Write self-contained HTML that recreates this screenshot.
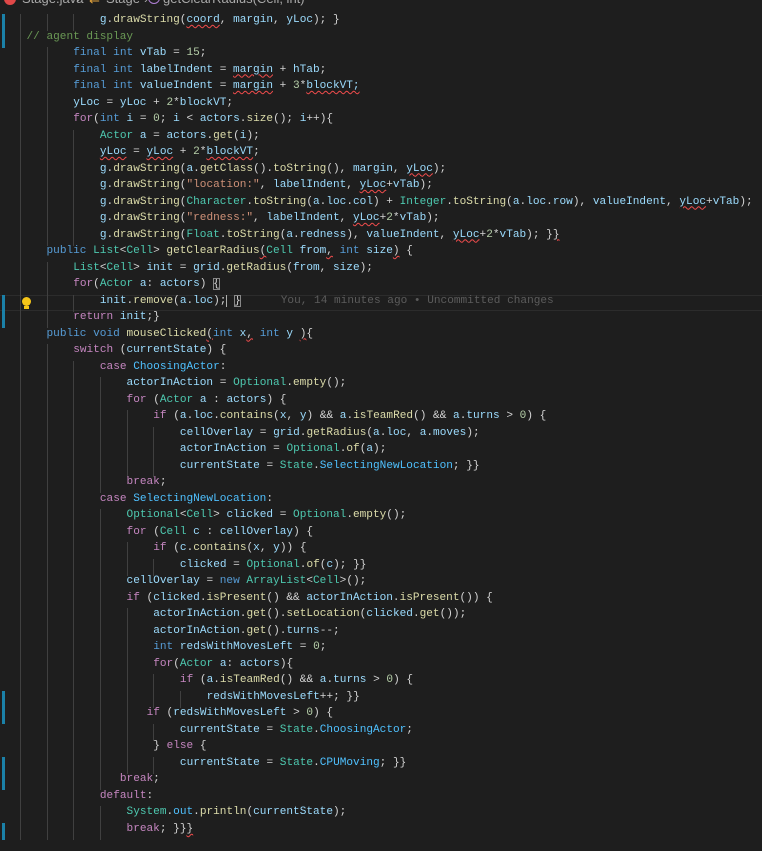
<!DOCTYPE html>
<html><head><meta charset="utf-8">
<style>
html,body{margin:0;padding:0;background:#1e1e1e;width:762px;height:851px;overflow:hidden;position:relative}
#bc{position:absolute;top:-9px;left:0;height:17px;width:762px;font:13px "Liberation Sans",sans-serif;color:#a9a9a9;white-space:nowrap}
.ln{position:absolute;left:0;height:16.51px;line-height:16.51px;font:11.1px "Liberation Mono",monospace;color:#d4d4d4;white-space:pre;width:762px}
.g{position:absolute;width:1px;background:#404040}
.k{color:#569cd6}.c{color:#c586c0}.t{color:#4ec9b0}.v{color:#9cdcfe}.f{color:#dcdcaa}.s{color:#ce9178}.n{color:#b5cea8}.m{color:#6a9955}.e{color:#4fc1ff}
.w{text-decoration:underline wavy #f14c4c;text-decoration-thickness:1px;text-underline-offset:2px}
.bar{position:absolute;left:2px;width:3px;background:#1b81a8}
.bx{outline:1px solid #888;outline-offset:-1px}
</style></head><body>
<div id="bc"><span style="position:absolute;left:4px;top:2px;width:12px;height:12px;border-radius:6px;background:#e04848"></span><span style="position:absolute;left:22px">Stage.java</span><span style="position:absolute;left:76px">›</span><span style="position:absolute;left:89px;color:#e2a33c">⇄</span><span style="position:absolute;left:106px">Stage</span><span style="position:absolute;left:144px">›</span><span style="position:absolute;left:148px;top:1px;width:10px;height:10px;border:1px solid #b180d7;border-radius:6px"></span><span style="position:absolute;left:163px">getClearRadius(Cell, int)</span></div>
<div id="ed"></div>
<script>
const L=[
[14,'<span class="v">g</span>.<span class="f">drawString</span>(<span class="v w">coord</span>, <span class="v">margin</span>, <span class="v">yLoc</span>); }'],
[3,'<span class="m">// agent display</span>'],
[10,'<span class="k">final</span> <span class="k">int</span> <span class="v">vTab</span> = <span class="n">15</span>;'],
[10,'<span class="k">final</span> <span class="k">int</span> <span class="v">labelIndent</span> = <span class="v w">margin</span> + <span class="v">hTab</span>;'],
[10,'<span class="k">final</span> <span class="k">int</span> <span class="v">valueIndent</span> = <span class="v w">margin</span> + <span class="n">3</span>*<span class="v w">blockVT;</span>'],
[10,'<span class="v">yLoc</span> = <span class="v">yLoc</span> + <span class="n">2</span>*<span class="v">blockVT</span>;'],
[10,'<span class="c">for</span>(<span class="k">int</span> <span class="v">i</span> = <span class="n">0</span>; <span class="v">i</span> &lt; <span class="v">actors</span>.<span class="f">size</span>(); <span class="v">i</span>++){'],
[14,'<span class="t">Actor</span> <span class="v">a</span> = <span class="v">actors</span>.<span class="f">get</span>(<span class="v">i</span>);'],
[14,'<span class="v w">yLoc</span> = <span class="v w">yLoc</span> + <span class="n">2</span>*<span class="v w">blockVT</span>;'],
[14,'<span class="v">g</span>.<span class="f">drawString</span>(<span class="v">a</span>.<span class="f">getClass</span>().<span class="f">toString</span>(), <span class="v">margin</span>, <span class="v w">yLoc</span>);'],
[14,'<span class="v">g</span>.<span class="f">drawString</span>(<span class="s">"location:"</span>, <span class="v">labelIndent</span>, <span class="v w">yLoc</span>+<span class="v">vTab</span>);'],
[14,'<span class="v">g</span>.<span class="f">drawString</span>(<span class="t">Character</span>.<span class="f">toString</span>(<span class="v">a</span>.<span class="v">loc</span>.<span class="v">col</span>) + <span class="t">Integer</span>.<span class="f">toString</span>(<span class="v">a</span>.<span class="v">loc</span>.<span class="v">row</span>), <span class="v">valueIndent</span>, <span class="v w">yLoc</span>+<span class="v">vTab</span>);'],
[14,'<span class="v">g</span>.<span class="f">drawString</span>(<span class="s">"redness:"</span>, <span class="v">labelIndent</span>, <span class="v w">yLoc</span>+<span class="n">2</span>*<span class="v">vTab</span>);'],
[14,'<span class="v">g</span>.<span class="f">drawString</span>(<span class="t">Float</span>.<span class="f">toString</span>(<span class="v">a</span>.<span class="v">redness</span>), <span class="v">valueIndent</span>, <span class="v w">yLoc</span>+<span class="n">2</span>*<span class="v">vTab</span>); }<span class="w">}</span>'],
[6,'<span class="k">public</span> <span class="t">List</span>&lt;<span class="t">Cell</span>&gt; <span class="f">getClearRadius</span><span class="w">(</span><span class="t">Cell</span> <span class="v">from</span><span class="w">,</span> <span class="k">int</span> <span class="v">size</span><span class="w">)</span> {'],
[10,'<span class="t">List</span>&lt;<span class="t">Cell</span>&gt; <span class="v">init</span> = <span class="v">grid</span>.<span class="f">getRadius</span>(<span class="v">from</span>, <span class="v">size</span>);'],
[10,'<span class="c">for</span>(<span class="t">Actor</span> <span class="v">a</span>: <span class="v">actors</span>) <span class="bx">{</span>'],
[14,'<span class="v">init</span>.<span class="f">remove</span>(<span class="v">a</span>.<span class="v">loc</span>);<span style="border-left:1px solid #aeafad"></span> <span class="bx">}</span>      <span style="color:#5c5c5c">You, 14 minutes ago • Uncommitted changes</span>'],
[10,'<span class="c">return</span> <span class="v">init</span>;}'],
[6,'<span class="k">public</span> <span class="k">void</span> <span class="f">mouseClicked</span><span class="w">(</span><span class="k">int</span> <span class="v">x</span><span class="w">,</span> <span class="k">int</span> <span class="v">y</span> <span class="w">)</span>{'],
[10,'<span class="c">switch</span> (<span class="v">currentState</span>) {'],
[14,'<span class="c">case</span> <span class="e">ChoosingActor</span>:'],
[18,'<span class="v">actorInAction</span> = <span class="t">Optional</span>.<span class="f">empty</span>();'],
[18,'<span class="c">for</span> (<span class="t">Actor</span> <span class="v">a</span> : <span class="v">actors</span>) {'],
[22,'<span class="c">if</span> (<span class="v">a</span>.<span class="v">loc</span>.<span class="f">contains</span>(<span class="v">x</span>, <span class="v">y</span>) &amp;&amp; <span class="v">a</span>.<span class="f">isTeamRed</span>() &amp;&amp; <span class="v">a</span>.<span class="v">turns</span> &gt; <span class="n">0</span>) {'],
[26,'<span class="v">cellOverlay</span> = <span class="v">grid</span>.<span class="f">getRadius</span>(<span class="v">a</span>.<span class="v">loc</span>, <span class="v">a</span>.<span class="v">moves</span>);'],
[26,'<span class="v">actorInAction</span> = <span class="t">Optional</span>.<span class="f">of</span>(<span class="v">a</span>);'],
[26,'<span class="v">currentState</span> = <span class="t">State</span>.<span class="e">SelectingNewLocation</span>; }}'],
[18,'<span class="c">break</span>;'],
[14,'<span class="c">case</span> <span class="e">SelectingNewLocation</span>:'],
[18,'<span class="t">Optional</span>&lt;<span class="t">Cell</span>&gt; <span class="v">clicked</span> = <span class="t">Optional</span>.<span class="f">empty</span>();'],
[18,'<span class="c">for</span> (<span class="t">Cell</span> <span class="v">c</span> : <span class="v">cellOverlay</span>) {'],
[22,'<span class="c">if</span> (<span class="v">c</span>.<span class="f">contains</span>(<span class="v">x</span>, <span class="v">y</span>)) {'],
[26,'<span class="v">clicked</span> = <span class="t">Optional</span>.<span class="f">of</span>(<span class="v">c</span>); }}'],
[18,'<span class="v">cellOverlay</span> = <span class="k">new</span> <span class="t">ArrayList</span>&lt;<span class="t">Cell</span>&gt;();'],
[18,'<span class="c">if</span> (<span class="v">clicked</span>.<span class="f">isPresent</span>() &amp;&amp; <span class="v">actorInAction</span>.<span class="f">isPresent</span>()) {'],
[22,'<span class="v">actorInAction</span>.<span class="f">get</span>().<span class="f">setLocation</span>(<span class="v">clicked</span>.<span class="f">get</span>());'],
[22,'<span class="v">actorInAction</span>.<span class="f">get</span>().<span class="v">turns</span>--;'],
[22,'<span class="k">int</span> <span class="v">redsWithMovesLeft</span> = <span class="n">0</span>;'],
[22,'<span class="c">for</span>(<span class="t">Actor</span> <span class="v">a</span>: <span class="v">actors</span>){'],
[26,'<span class="c">if</span> (<span class="v">a</span>.<span class="f">isTeamRed</span>() &amp;&amp; <span class="v">a</span>.<span class="v">turns</span> &gt; <span class="n">0</span>) {'],
[30,'<span class="v">redsWithMovesLeft</span>++; }}'],
[21,'<span class="c">if</span> (<span class="v">redsWithMovesLeft</span> &gt; <span class="n">0</span>) {'],
[26,'<span class="v">currentState</span> = <span class="t">State</span>.<span class="e">ChoosingActor</span>;'],
[22,'} <span class="c">else</span> {'],
[26,'<span class="v">currentState</span> = <span class="t">State</span>.<span class="e">CPUMoving</span>; }}'],
[17,'<span class="c">break</span>;'],
[14,'<span class="c">default</span>:'],
[18,'<span class="t">System</span>.<span class="e">out</span>.<span class="f">println</span>(<span class="v">currentState</span>);'],
[18,'<span class="c">break</span>; }}<span class="w">}</span>']
];
const CW=6.67,X0=6.5,LH=16.51,T0=14;
const bars=[0,1,17,18,41,42,45,46,49];
let h='';
L.forEach((l,i)=>{
 const top=T0+i*LH;
 if(i==17) h+=`<div style="position:absolute;left:0;top:${top}px;width:762px;height:${LH-2}px;border-top:1px solid #2c2c2c;border-bottom:1px solid #2c2c2c"></div>`;
 for(let c=2;c<l[0];c+=4){h+=`<div class="g" style="left:${Math.round(X0+c*CW)}px;top:${top}px;height:${LH+0.5}px"></div>`;}
 if(bars.includes(i)) h+=`<div class="bar" style="top:${top}px;height:${LH+0.5}px"></div>`;
 h+=`<div class="ln" style="top:${top}px;padding-left:${X0+l[0]*CW}px">${l[1]}</div>`;
});
h+=`<div style="position:absolute;left:22px;top:${T0+17*LH+2}px;width:9px;height:9px;border-radius:5px;background:#f5c518"></div><div style="position:absolute;left:24px;top:${T0+17*LH+11}px;width:5px;height:3px;background:#f5c518"></div>`;
document.getElementById('ed').innerHTML=h;
</script>
</body></html>
